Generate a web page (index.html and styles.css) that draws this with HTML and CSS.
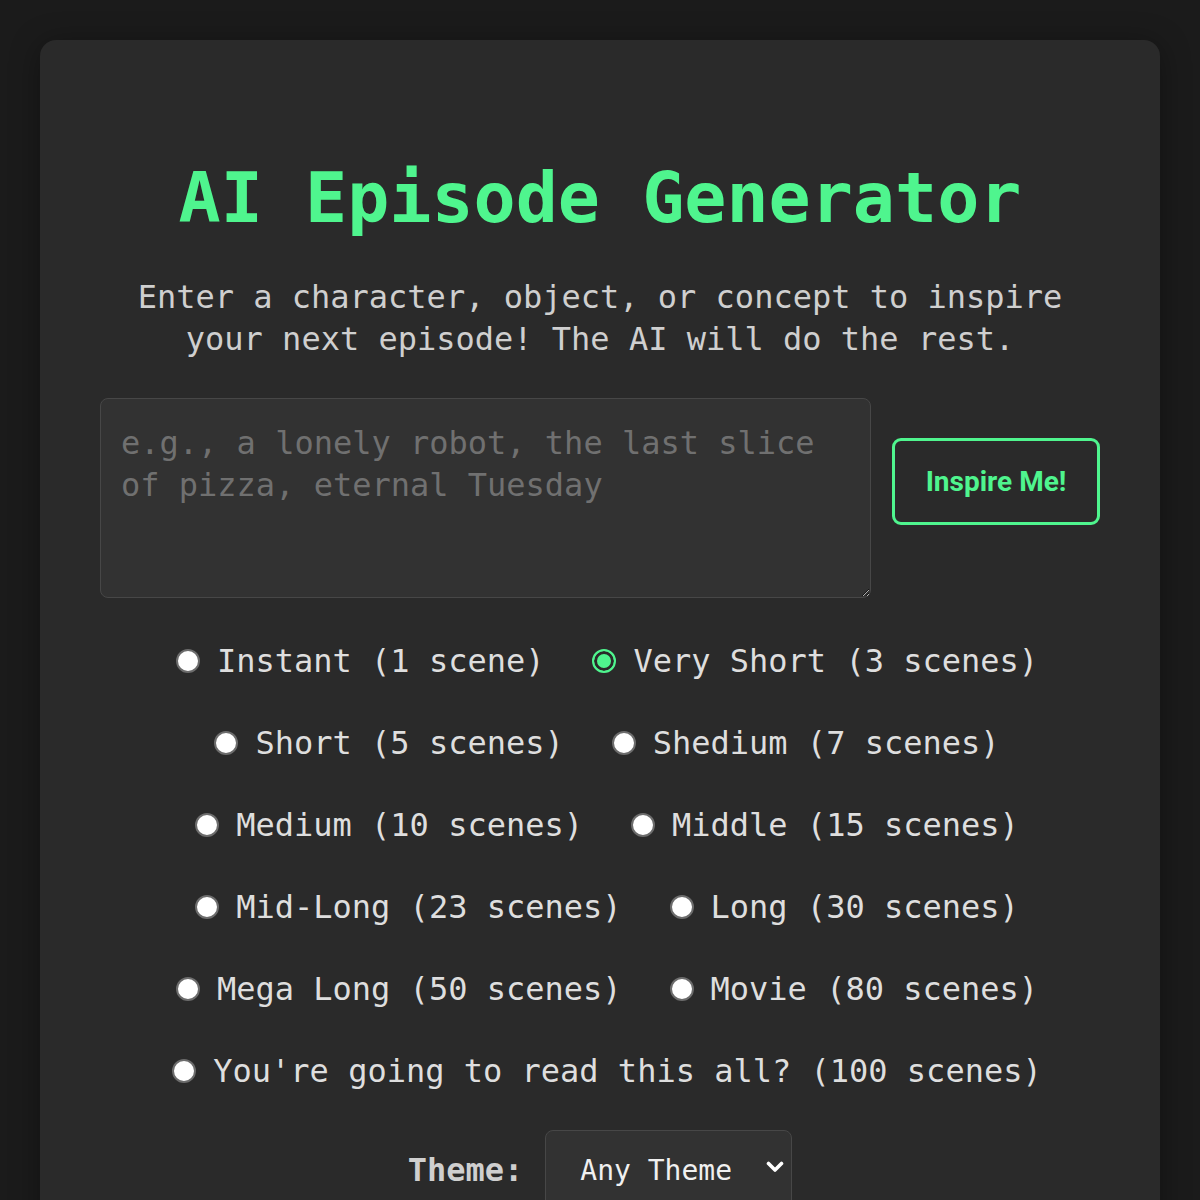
FILE: index.html
```html
<!DOCTYPE html>
<html lang="en">
<head>
<meta charset="utf-8">
<title>AI Episode Generator</title>
<link rel="stylesheet" href="styles.css">
</head>
<body>
  <main class="card">
    <h1 class="title">AI Episode Generator</h1>
    <p class="intro">Enter a character, object, or concept to inspire your next episode! The AI will do the rest.</p>

    <div class="prompt-row">
      <textarea class="prompt" placeholder="e.g., a lonely robot, the last slice of pizza, eternal Tuesday"></textarea>
      <button class="inspire" type="button">Inspire Me!</button>
    </div>

    <div class="lengths">
      <label class="length"><input type="radio" name="length" value="1"><span>Instant (1 scene)</span></label>
      <label class="length"><input type="radio" name="length" value="3" checked><span>Very Short (3 scenes)</span></label>
      <label class="length"><input type="radio" name="length" value="5"><span>Short (5 scenes)</span></label>
      <label class="length"><input type="radio" name="length" value="7"><span>Shedium (7 scenes)</span></label>
      <label class="length"><input type="radio" name="length" value="10"><span>Medium (10 scenes)</span></label>
      <label class="length"><input type="radio" name="length" value="15"><span>Middle (15 scenes)</span></label>
      <label class="length"><input type="radio" name="length" value="23"><span>Mid-Long (23 scenes)</span></label>
      <label class="length"><input type="radio" name="length" value="30"><span>Long (30 scenes)</span></label>
      <label class="length"><input type="radio" name="length" value="50"><span>Mega Long (50 scenes)</span></label>
      <label class="length"><input type="radio" name="length" value="80"><span>Movie (80 scenes)</span></label>
      <label class="length"><input type="radio" name="length" value="100"><span>You're going to read this all? (100 scenes)</span></label>
    </div>

    <div class="theme-row">
      <label class="theme-label" for="theme">Theme:</label>
      <div class="select-wrap">
        <select id="theme" class="theme-select">
          <option>Any Theme</option>
          <option>Comedy</option>
          <option>Mystery</option>
          <option>Sci-Fi</option>
        </select>
        <svg class="chevron" width="18" height="12" viewBox="0 0 18 12" aria-hidden="true">
          <path d="M2.5 2.5 L9 9 L15.5 2.5" fill="none" stroke="#ffffff" stroke-width="3.6" stroke-linecap="round" stroke-linejoin="round"/>
        </svg>
      </div>
    </div>
  </main>
</body>
</html>
```

FILE: styles.css
```css
html, body {
  margin: 0;
  background: #1b1b1b;
}

body {
  padding: 40px;
  font-family: "DejaVu Sans Mono", "Liberation Mono", monospace;
  color: #dedede;
}

.card {
  background: #2a2a2a;
  border-radius: 16px;
  box-shadow: 0 4px 30px rgba(0, 0, 0, 0.35);
  padding: 116px 60px 80px;
  min-height: 1200px;
  box-sizing: border-box;
}

.title {
  margin: 0;
  font-size: 70px;
  line-height: 84px;
  font-weight: 700;
  color: #4ff58e;
  text-align: center;
}

.intro {
  margin: 36px auto 0;
  max-width: 960px;
  font-size: 32px;
  line-height: 42px;
  color: #cfcfcf;
  text-align: center;
}

.prompt-row {
  display: flex;
  align-items: flex-start;
  gap: 21px;
  margin-top: 38px;
}

.prompt {
  flex: 1;
  height: 200px;
  box-sizing: border-box;
  margin: 0;
  padding: 23px 20px 19px;
  background: #323232;
  border: 1px solid #474747;
  border-radius: 8px;
  color: #e2e2e2;
  font-family: inherit;
  font-size: 32px;
  line-height: 42px;
  resize: both;
  outline: none;
}

.prompt::placeholder {
  color: #707070;
}

.inspire {
  margin-top: 40px;
  width: 208px;
  height: 87px;
  box-sizing: border-box;
  background: transparent;
  border: 3px solid #4ff58e;
  border-radius: 9px;
  color: #4ff58e;
  font-family: Roboto, "Liberation Sans", sans-serif;
  font-weight: 700;
  font-size: 28px;
  cursor: pointer;
}

.lengths {
  display: flex;
  flex-wrap: wrap;
  justify-content: center;
  column-gap: 34px;
  row-gap: 40px;
  margin-top: 42px;
}

.length {
  display: flex;
  align-items: center;
  gap: 17px;
  padding-left: 14px;
  font-size: 32px;
  line-height: 42px;
  color: #dedede;
  cursor: pointer;
}

.length input {
  appearance: none;
  -webkit-appearance: none;
  margin: 0;
  width: 24px;
  height: 24px;
  flex: none;
  border-radius: 50%;
  background: #ffffff;
  border: 2px solid #6c6c6c;
  box-sizing: border-box;
}

.length input:checked {
  background: #4ff58e;
  border-color: #4ff58e;
  box-shadow: inset 0 0 0 3px #2a2a2a;
}

.theme-row {
  display: flex;
  justify-content: center;
  align-items: center;
  gap: 22px;
  margin-top: 38px;
}

.theme-label {
  font-size: 32px;
  font-weight: 700;
  color: #cfcfcf;
}

.select-wrap {
  position: relative;
}

.theme-select {
  appearance: none;
  -webkit-appearance: none;
  height: 80px;
  width: 247px;
  margin: 0;
  padding: 0 60px 0 34px;
  background: #323232;
  border: 1px solid #474747;
  border-radius: 8px;
  color: #f0f0f0;
  font-family: inherit;
  font-size: 28px;
  outline: none;
}

.chevron {
  position: absolute;
  right: 8px;
  top: 31px;
  pointer-events: none;
}
```
